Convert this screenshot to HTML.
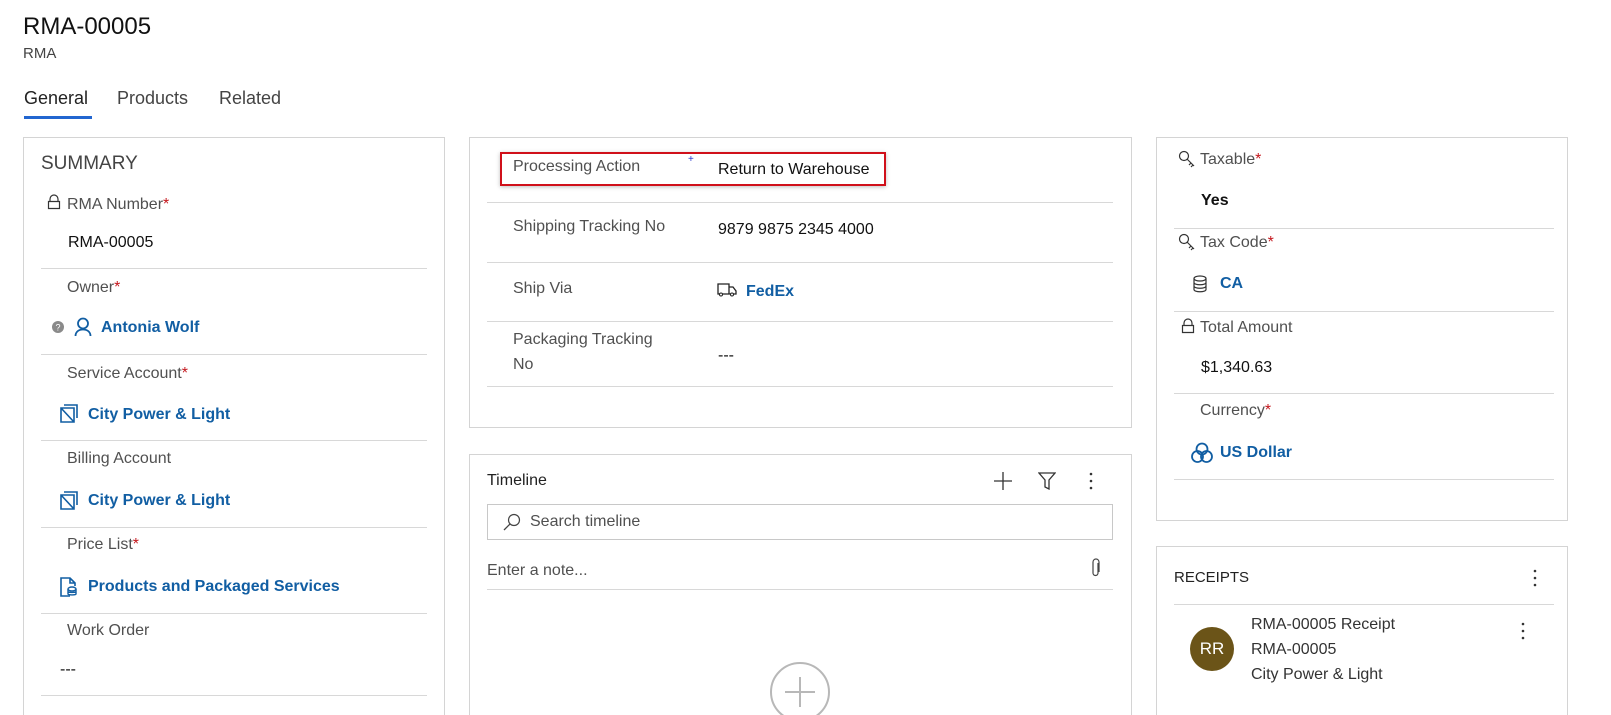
<!DOCTYPE html>
<html style="width:1611px;height:715px;overflow:hidden"><head><meta charset="utf-8">
<style>
*{box-sizing:border-box;margin:0;padding:0}
body{width:1611px;height:715px;overflow:hidden;background:#fff;font-family:"Liberation Sans",sans-serif;color:#323130;position:relative}
.t{position:absolute;line-height:20px;white-space:nowrap;font-size:16px}
.lb{color:#505050}
.v{color:#111;font-size:16px}
.lk{color:#115ea3;font-weight:bold}
.r{color:#c4161c}
.card{position:absolute;border:1px solid #d4d4d4;background:#fff}
.hl{position:absolute;height:1px;background:#d8d8d8}
svg{position:absolute}
</style></head><body>
<div class="t" style="left:23px;top:13px;font-size:24px;line-height:28px;color:#111">RMA-00005</div>
<div class="t" style="left:23px;top:44px;font-size:15px;color:#444">RMA</div>
<div class="t" style="left:24px;top:88px;font-size:18px;color:#222">General</div>
<div style="position:absolute;left:24px;top:116px;width:68px;height:3px;background:#2266d0"></div>
<div class="t" style="left:117px;top:88px;font-size:18px;color:#444">Products</div>
<div class="t" style="left:219px;top:88px;font-size:18px;color:#444">Related</div>

<!-- left card -->
<div class="card" style="left:23px;top:137px;width:422px;height:582px"></div>
<div class="t" style="left:41px;top:153px;font-size:19px;color:#444;line-height:22px">SUMMARY</div>
<svg style="left:46px;top:194px" width="16" height="16" viewBox="0 0 16 16"><path d="M4 7V5a4 4 0 0 1 8 0v2M2.5 7.5h11v7h-11z" fill="none" stroke="#333" stroke-width="1.2"/></svg>
<div class="t lb" style="left:67px;top:195px">RMA Number<span class="r">*</span></div>
<div class="t v" style="left:68px;top:233px">RMA-00005</div>
<div class="hl" style="left:41px;top:268px;width:386px"></div>
<div class="t lb" style="left:67px;top:278px">Owner<span class="r">*</span></div>
<svg style="left:51px;top:320px" width="14" height="14" viewBox="0 0 14 14"><circle cx="7" cy="7" r="6" fill="#8a8a8a"/><text x="7" y="10.5" font-size="9" text-anchor="middle" fill="#fff" font-family="Liberation Sans">?</text></svg>
<svg style="left:74px;top:317px" width="18" height="20" viewBox="0 0 18 20"><circle cx="9" cy="6.5" r="5" fill="none" stroke="#115ea3" stroke-width="1.8"/><path d="M1.5 19c0-4 3-6.5 7.5-6.5s7.5 2.5 7.5 6.5" fill="none" stroke="#115ea3" stroke-width="1.8"/></svg>
<div class="t lk" style="left:101px;top:318px">Antonia Wolf</div>
<div class="hl" style="left:41px;top:354px;width:386px"></div>
<div class="t lb" style="left:67px;top:364px">Service Account<span class="r">*</span></div>
<svg style="left:60px;top:404px" width="18" height="19" viewBox="0 0 18 19"><path d="M1 4h13v14H1zM4 1h13v13M1 4l13 14" fill="none" stroke="#115ea3" stroke-width="1.6"/></svg>
<div class="t lk" style="left:88px;top:405px">City Power &amp; Light</div>
<div class="hl" style="left:41px;top:440px;width:386px"></div>
<div class="t lb" style="left:67px;top:449px">Billing Account</div>
<svg style="left:60px;top:491px" width="18" height="19" viewBox="0 0 18 19"><path d="M1 4h13v14H1zM4 1h13v13M1 4l13 14" fill="none" stroke="#115ea3" stroke-width="1.6"/></svg>
<div class="t lk" style="left:88px;top:491px">City Power &amp; Light</div>
<div class="hl" style="left:41px;top:527px;width:386px"></div>
<div class="t lb" style="left:67px;top:535px">Price List<span class="r">*</span></div>
<svg style="left:60px;top:577px" width="18" height="20" viewBox="0 0 18 20"><path d="M10 19H1V1h9l5 5v3M10 1v5h5" fill="none" stroke="#115ea3" stroke-width="1.6"/><ellipse cx="12" cy="12" rx="4" ry="2" fill="none" stroke="#115ea3" stroke-width="1.4"/><path d="M8 12v5c0 1.2 8 1.2 8 0v-5M8 14.5c0 1.2 8 1.2 8 0" fill="none" stroke="#115ea3" stroke-width="1.4"/></svg>
<div class="t lk" style="left:88px;top:577px">Products and Packaged Services</div>
<div class="hl" style="left:41px;top:613px;width:386px"></div>
<div class="t lb" style="left:67px;top:621px">Work Order</div>
<div class="t v" style="left:60px;top:660px">---</div>
<div class="hl" style="left:41px;top:695px;width:386px"></div>

<!-- middle top card -->
<div class="card" style="left:469px;top:137px;width:663px;height:291px"></div>
<div style="position:absolute;left:500px;top:152px;width:386px;height:34px;border:2px solid #d0101a;box-shadow:0 1px 4px rgba(0,0,0,.25)"></div>
<div class="t lb" style="left:513px;top:157px">Processing Action</div>
<div class="t" style="left:688px;top:154px;font-size:10px;color:#2233cc;line-height:12px">+</div>
<div class="t v" style="left:718px;top:160px">Return to Warehouse</div>
<div class="hl" style="left:487px;top:202px;width:626px"></div>
<div class="t lb" style="left:513px;top:217px">Shipping Tracking No</div>
<div class="t v" style="left:718px;top:220px">9879 9875 2345 4000</div>
<div class="hl" style="left:487px;top:262px;width:626px"></div>
<div class="t lb" style="left:513px;top:279px">Ship Via</div>
<svg style="left:717px;top:283px" width="20" height="14" viewBox="0 0 20 14"><path d="M1 1h11v10H1zM12 4h4l3 4v3h-7" fill="none" stroke="#222" stroke-width="1.3"/><circle cx="4" cy="11.5" r="1.5" fill="#fff" stroke="#222"/><circle cx="15" cy="11.5" r="1.5" fill="#fff" stroke="#222"/></svg>
<div class="t lk" style="left:746px;top:282px">FedEx</div>
<div class="hl" style="left:487px;top:321px;width:626px"></div>
<div class="t lb" style="left:513px;top:330px">Packaging Tracking</div>
<div class="t lb" style="left:513px;top:355px">No</div>
<div class="t v" style="left:718px;top:346px">---</div>
<div class="hl" style="left:487px;top:386px;width:626px"></div>

<!-- timeline card -->
<div class="card" style="left:469px;top:454px;width:663px;height:265px"></div>
<div class="t" style="left:487px;top:471px;color:#222">Timeline</div>
<svg style="left:993px;top:471px" width="20" height="20" viewBox="0 0 20 20"><path d="M10 1v18M1 10h18" stroke="#333" stroke-width="1.3"/></svg>
<svg style="left:1038px;top:472px" width="18" height="18" viewBox="0 0 18 18"><path d="M1 1h16l-6 7v9l-4-2V8z" fill="none" stroke="#333" stroke-width="1.3"/></svg>
<svg style="left:1088px;top:471px" width="6" height="20" viewBox="0 0 6 20"><circle cx="3" cy="3" r="1.3" fill="#333"/><circle cx="3" cy="10" r="1.3" fill="#333"/><circle cx="3" cy="17" r="1.3" fill="#333"/></svg>
<div style="position:absolute;left:487px;top:504px;width:626px;height:36px;border:1px solid #c8c8c8"></div>
<svg style="left:503px;top:513px" width="18" height="18" viewBox="0 0 18 18"><circle cx="11" cy="7" r="5.5" fill="none" stroke="#444" stroke-width="1.2"/><path d="M7 11l-6 6" stroke="#444" stroke-width="1.3"/></svg>
<div class="t lb" style="left:530px;top:512px">Search timeline</div>
<div class="t lb" style="left:487px;top:561px">Enter a note...</div>
<svg style="left:1090px;top:558px" width="12" height="20" viewBox="0 0 12 20"><path d="M8 5v10a2.5 2.5 0 0 1-5 0V4a3 3 0 0 1 6 0v10" fill="none" stroke="#444" stroke-width="1.2"/></svg>
<div class="hl" style="left:487px;top:589px;width:626px"></div>
<svg style="left:769px;top:661px" width="62" height="62" viewBox="0 0 62 62"><circle cx="31" cy="31" r="29" fill="none" stroke="#b8b8b8" stroke-width="2"/><path d="M31 16v30M16 31h30" stroke="#b8b8b8" stroke-width="2"/></svg>

<!-- right top card -->
<div class="card" style="left:1156px;top:137px;width:412px;height:384px"></div>
<svg style="left:1178px;top:150px" width="20" height="18" viewBox="0 0 20 18"><circle cx="6" cy="6" r="4.5" fill="none" stroke="#333" stroke-width="1.2"/><path d="M9 9l7 7M13 13l-2 2M15 15l-2 2" stroke="#333" stroke-width="1.2" fill="none"/></svg>
<div class="t lb" style="left:1200px;top:150px">Taxable<span class="r">*</span></div>
<div class="t" style="left:1201px;top:191px;font-weight:bold;color:#111">Yes</div>
<div class="hl" style="left:1174px;top:228px;width:380px"></div>
<svg style="left:1178px;top:233px" width="20" height="18" viewBox="0 0 20 18"><circle cx="6" cy="6" r="4.5" fill="none" stroke="#333" stroke-width="1.2"/><path d="M9 9l7 7M13 13l-2 2M15 15l-2 2" stroke="#333" stroke-width="1.2" fill="none"/></svg>
<div class="t lb" style="left:1200px;top:233px">Tax Code<span class="r">*</span></div>
<svg style="left:1192px;top:275px" width="16" height="18" viewBox="0 0 16 18"><ellipse cx="8" cy="3.5" rx="6" ry="2.5" fill="none" stroke="#333" stroke-width="1.2"/><path d="M2 3.5v11c0 3 12 3 12 0v-11M2 7.5c0 3 12 3 12 0M2 11c0 3 12 3 12 0" fill="none" stroke="#333" stroke-width="1.2"/></svg>
<div class="t lk" style="left:1220px;top:274px">CA</div>
<div class="hl" style="left:1174px;top:311px;width:380px"></div>
<svg style="left:1180px;top:318px" width="16" height="16" viewBox="0 0 16 16"><path d="M4 7V5a4 4 0 0 1 8 0v2M2.5 7.5h11v7h-11z" fill="none" stroke="#333" stroke-width="1.2"/></svg>
<div class="t lb" style="left:1200px;top:318px">Total Amount</div>
<div class="t v" style="left:1201px;top:358px">$1,340.63</div>
<div class="hl" style="left:1174px;top:393px;width:380px"></div>
<div class="t lb" style="left:1200px;top:401px">Currency<span class="r">*</span></div>
<svg style="left:1191px;top:442px" width="22" height="22" viewBox="0 0 22 22"><circle cx="11" cy="7" r="5.5" fill="none" stroke="#115ea3" stroke-width="1.8"/><circle cx="6.5" cy="14.5" r="5.5" fill="none" stroke="#115ea3" stroke-width="1.8"/><circle cx="15.5" cy="14.5" r="5.5" fill="none" stroke="#115ea3" stroke-width="1.8"/></svg>
<div class="t lk" style="left:1220px;top:443px">US Dollar</div>
<div class="hl" style="left:1174px;top:479px;width:380px"></div>

<!-- receipts -->
<div class="card" style="left:1156px;top:546px;width:412px;height:173px"></div>
<div class="t" style="left:1174px;top:568px;font-size:15px;color:#222">RECEIPTS</div>
<svg style="left:1532px;top:568px" width="6" height="20" viewBox="0 0 6 20"><circle cx="3" cy="3" r="1.3" fill="#333"/><circle cx="3" cy="10" r="1.3" fill="#333"/><circle cx="3" cy="17" r="1.3" fill="#333"/></svg>
<div class="hl" style="left:1174px;top:604px;width:380px"></div>
<div style="position:absolute;left:1190px;top:627px;width:44px;height:44px;border-radius:50%;background:#6b5418;color:#fff;font-size:17px;line-height:44px;text-align:center">RR</div>
<div class="t" style="left:1251px;top:615px;color:#333">RMA-00005 Receipt</div>
<div class="t" style="left:1251px;top:640px;color:#333">RMA-00005</div>
<div class="t" style="left:1251px;top:665px;color:#333">City Power &amp; Light</div>
<svg style="left:1520px;top:621px" width="6" height="20" viewBox="0 0 6 20"><circle cx="3" cy="3" r="1.3" fill="#333"/><circle cx="3" cy="10" r="1.3" fill="#333"/><circle cx="3" cy="17" r="1.3" fill="#333"/></svg>
</body></html>
